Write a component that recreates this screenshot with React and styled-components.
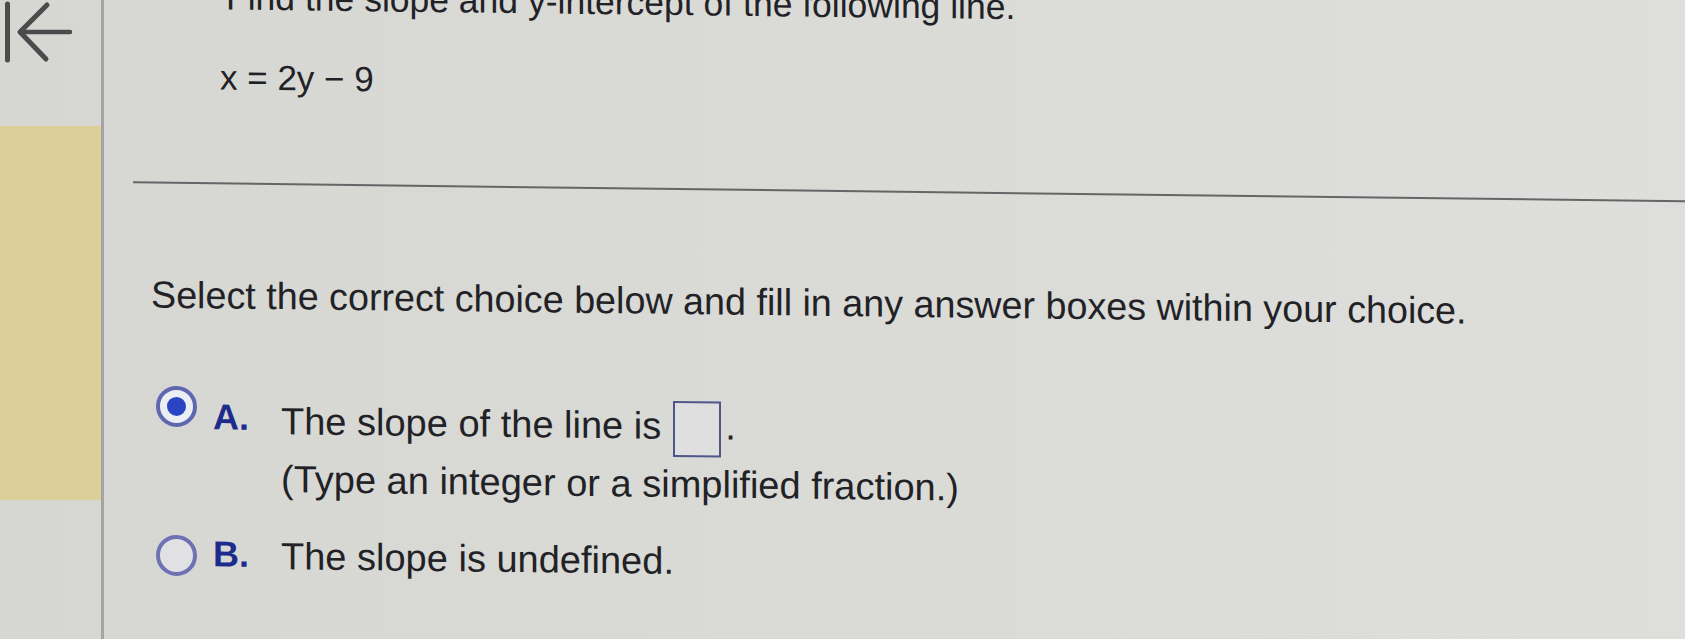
import React from "react";
import styled, { createGlobalStyle } from "styled-components";

const GlobalStyle = createGlobalStyle`
  html, body {
    margin: 0;
    padding: 0;
  }
  body {
    font-family: "Liberation Sans", Arial, sans-serif;
    background: #d9d9d6;
  }
`;

const Page = styled.div`
  display: flex;
  height: 100vh;
  overflow: hidden;
  background: linear-gradient(90deg, #d6d6d3 0%, #dadad7 50%, #dedfdc 100%);
  color: #222226;
`;

const Sidebar = styled.aside`
  width: 101px;
  flex-shrink: 0;
  display: flex;
  flex-direction: column;
  border-right: 3px solid #a4a4a4;
`;

const BackButton = styled.button`
  width: 80px;
  height: 66px;
  padding: 0;
  border: none;
  background: none;
  cursor: pointer;

  & svg {
    display: block;
  }
`;

const Highlight = styled.div`
  margin-top: 60px;
  height: 374px;
  background: #dccf97;
`;

const Main = styled.main`
  flex: 1;
  padding-left: 29px;
  transform: skewY(0.7deg);
  transform-origin: 0 0;
`;

const Prompt = styled.p`
  margin: -26px 0 0 93px;
  font-size: 35.5px;
  line-height: 44px;
  white-space: nowrap;
`;

const Equation = styled.div`
  margin: 36px 0 0 87px;
  font-size: 35px;
  line-height: 44px;
  white-space: pre;
`;

const Divider = styled.hr`
  margin: 83px 0 0;
  border: none;
  border-top: 2px solid #656567;
`;

const Instruction = styled.p`
  margin: 89px 0 0 18px;
  font-size: 37.7px;
  line-height: 44px;
  white-space: nowrap;
`;

const ChoiceList = styled.div`
  margin: 74px 0 0 23px;
  display: flex;
  flex-direction: column;
  gap: 19px;
`;

const Choice = styled.div`
  display: flex;
  align-items: flex-start;
  gap: 16px;
`;

const Radio = styled.span`
  width: 41px;
  height: 41px;
  box-sizing: border-box;
  flex-shrink: 0;
  border-radius: 50%;
  border: 4px solid ${(p) => (p.$checked ? "#5f67b0" : "#6c72b2")};
  background: ${(p) => (p.$checked ? "#eceef5" : "#e1e1e3")};
  display: flex;
  align-items: center;
  justify-content: center;
  margin-top: ${(p) => p.$offset || 0}px;

  &::after {
    content: "";
    display: ${(p) => (p.$checked ? "block" : "none")};
    width: 19px;
    height: 19px;
    border-radius: 50%;
    background: #2a45c4;
  }
`;

const Label = styled.span`
  width: 52px;
  flex-shrink: 0;
  margin-top: ${(p) => p.$offset || 0}px;
  font-size: 36px;
  line-height: 47px;
  font-weight: bold;
  color: #1d2b8c;
`;

const Body = styled.div`
  font-size: 38px;
  line-height: 58px;
  white-space: nowrap;
`;

const AnswerBox = styled.span`
  display: inline-block;
  width: 48px;
  height: 56px;
  box-sizing: border-box;
  margin: 0 4px -4px 12px;
  vertical-align: -14px;
  border: 2px solid #50558a;
  background: #dfdfdf;
`;

const BackIcon = () => (
  <svg width="80" height="66" viewBox="0 0 80 66">
    <g stroke="#4b4b4e" strokeLinecap="round" fill="none">
      <line x1="7.5" y1="4" x2="7.5" y2="60" strokeWidth="5" />
      <line x1="21" y1="32" x2="70" y2="32" strokeWidth="4.5" />
      <polyline points="47,5 20,32 46,59" strokeWidth="5" strokeLinejoin="round" />
    </g>
  </svg>
);

export default function App() {
  return (
    <>
      <GlobalStyle />
      <Page>
        <Sidebar>
          <BackButton aria-label="Back">
            <BackIcon />
          </BackButton>
          <Highlight />
        </Sidebar>
        <Main>
          <Prompt>Find the slope and y-intercept of the following line.</Prompt>
          <Equation>{"x = 2y − 9"}</Equation>
          <Divider />
          <Instruction>
            Select the correct choice below and fill in any answer boxes within your choice.
          </Instruction>
          <ChoiceList>
            <Choice>
              <Radio $checked $offset={-5} role="radio" aria-checked="true" />
              <Label $offset={2}>A.</Label>
              <Body>
                The slope of the line is<AnswerBox />.
                <br />
                (Type an integer or a simplified fraction.)
              </Body>
            </Choice>
            <Choice>
              <Radio $offset={9} role="radio" aria-checked="false" />
              <Label $offset={4}>B.</Label>
              <Body>The slope is undefined.</Body>
            </Choice>
          </ChoiceList>
        </Main>
      </Page>
    </>
  );
}
